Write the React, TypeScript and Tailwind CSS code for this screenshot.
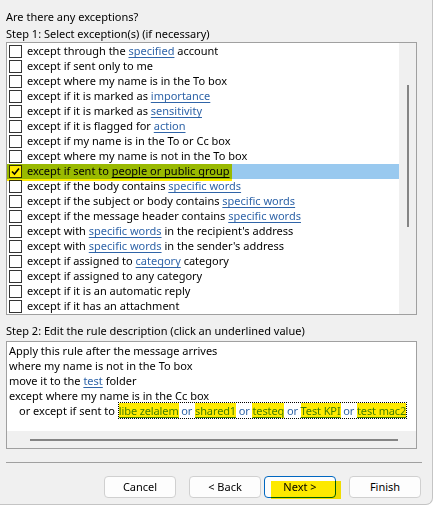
import React from 'react'

type Part = string | { l: string }

const LINK = 'text-[#2f64a8] underline underline-offset-2'

// exception rows of step 1
const rows: Part[][] = [
  ['except through the ', { l: 'specified' }, ' account'],
  ['except if sent only to me'],
  ['except where my name is in the To box'],
  ['except if it is marked as ', { l: 'importance' }],
  ['except if it is marked as ', { l: 'sensitivity' }],
  ['except if it is flagged for ', { l: 'action' }],
  ['except if my name is in the To or Cc box'],
  ['except where my name is not in the To box'],
  ['except if sent to ', { l: 'people or public group' }],
  ['except if the body contains ', { l: 'specific words' }],
  ['except if the subject or body contains ', { l: 'specific words' }],
  ['except if the message header contains ', { l: 'specific words' }],
  ['except with ', { l: 'specific words' }, " in the recipient's address"],
  ['except with ', { l: 'specific words' }, " in the sender's address"],
  ['except if assigned to ', { l: 'category' }, ' category'],
  ['except if assigned to any category'],
  ['except if it is an automatic reply'],
  ['except if it has an attachment'],
]

const SELECTED = 8

const names = ['libe zelalem', 'shared1', 'testeq', 'Test KPI', 'test mac2']

function Checkbox({ checked }: { checked?: boolean }) {
  return (
    <span className="flex h-[13px] w-[13px] shrink-0 items-center justify-center border border-[#333333] bg-white">
      {checked && (
        <svg width="9" height="9" viewBox="0 0 9 9">
          <path d="M1 4.5 L3.5 7 L8 1.5" fill="none" stroke="#000" strokeWidth="1.6" />
        </svg>
      )}
    </span>
  )
}

function Row({ parts, index }: { parts: Part[]; index: number }) {
  const selected = index === SELECTED
  return (
    <div className={`relative flex h-[15px] items-center whitespace-pre pl-[2px] ${selected ? 'bg-[#99c9ef]' : ''}`}>
      <Checkbox checked={selected} />
      <span className="ml-[5px]">
        {parts.map((p, i) =>
          typeof p === 'string' ? (
            <span key={i}>{p}</span>
          ) : (
            <span key={i} className={selected ? 'underline underline-offset-2' : LINK}>
              {p.l}
            </span>
          )
        )}
      </span>
      {/* marker highlight drawn over the selected row */}
      {selected && (
        <span className="pointer-events-none absolute left-0 top-0 z-10 h-[17px] w-[225px] bg-[#ffeb00] mix-blend-multiply" />
      )}
    </div>
  )
}

function Button({ label, focused, className = '' }: { label: string; focused?: boolean; className?: string }) {
  return (
    <button
      className={`relative h-[22px] w-[72px] rounded-[4px] border bg-[#fdfdfd] ${
        focused ? 'border-[#0067c0]' : 'border-[#d0d0d0]'
      } ${className}`}
    >
      {label}
      {focused && (
        <span className="pointer-events-none absolute left-[6px] top-[4px] h-[18px] w-[70px] bg-[#ffeb00] mix-blend-multiply" />
      )}
    </button>
  )
}

export default function App() {
  return (
    <div className="h-[507px] w-[434px] bg-white">
      <div className="relative h-[505px] w-[433px] rounded-br-[7px] border-b border-r border-[#c4c4c4] bg-[#f0f0f0] pl-[6px] pt-[9px] font-['Noto_Sans',sans-serif] text-[11px] text-black">
        <p className="leading-[16px]">Are there any exceptions?</p>
        <p className="mt-[1px] leading-[16px]">Step 1: Select exception(s) (if necessary)</p>

        <div className="isolate flex h-[273px] w-[411px] border border-[#a0a0a0] bg-white">
          <div className="flex-1 pt-[1px]">
            {rows.map((r, i) => (
              <Row key={i} parts={r} index={i} />
            ))}
          </div>
          <div className="flex w-[17px] justify-center bg-[#f0f0f0] pt-[42px]">
            <div className="h-[142px] w-[2px] bg-[#858585]" />
          </div>
        </div>

        <p className="mt-[8px] leading-[16px]">Step 2: Edit the rule description (click an underlined value)</p>

        <div className="mt-[2px] flex h-[108px] w-[411px] flex-col border border-[#a0a0a0] bg-white">
          <div className="whitespace-pre pl-[2px] pt-[1px] leading-[15px]">
            <p>Apply this rule after the message arrives</p>
            <p>where my name is not in the To box</p>
            <p>
              move it to the <span className={LINK}>test</span> folder
            </p>
            <p>except where my name is in the Cc box</p>
            <p className="pl-[10px]">
              or except if sent to{' '}
              <span className="border border-dotted border-black tracking-[-0.12px]">
                {names.map((n, i) => (
                  <React.Fragment key={n}>
                    {i > 0 && <span className="text-[#2f64a8]"> or </span>}
                    <span className="bg-[#ffeb00] text-[#3f7d00] underline underline-offset-2">{n}</span>
                  </React.Fragment>
                ))}
              </span>
            </p>
          </div>
          <div className="mt-auto flex h-[17px] items-center bg-[#f0f0f0] pl-[23px]">
            <div className="h-[2px] w-[368px] bg-[#858585]" />
          </div>
        </div>

        <div className="mt-[13px] h-px w-[416px] bg-[#a0a0a0]" />

        <div className="mt-[13px] flex w-[415px] justify-end">
          <Button label="Cancel" />
          <Button label="< Back" className="ml-[13px]" />
          <Button label="Next >" focused className="ml-[3px]" />
          <Button label="Finish" className="ml-[13px]" />
        </div>
      </div>
    </div>
  )
}
